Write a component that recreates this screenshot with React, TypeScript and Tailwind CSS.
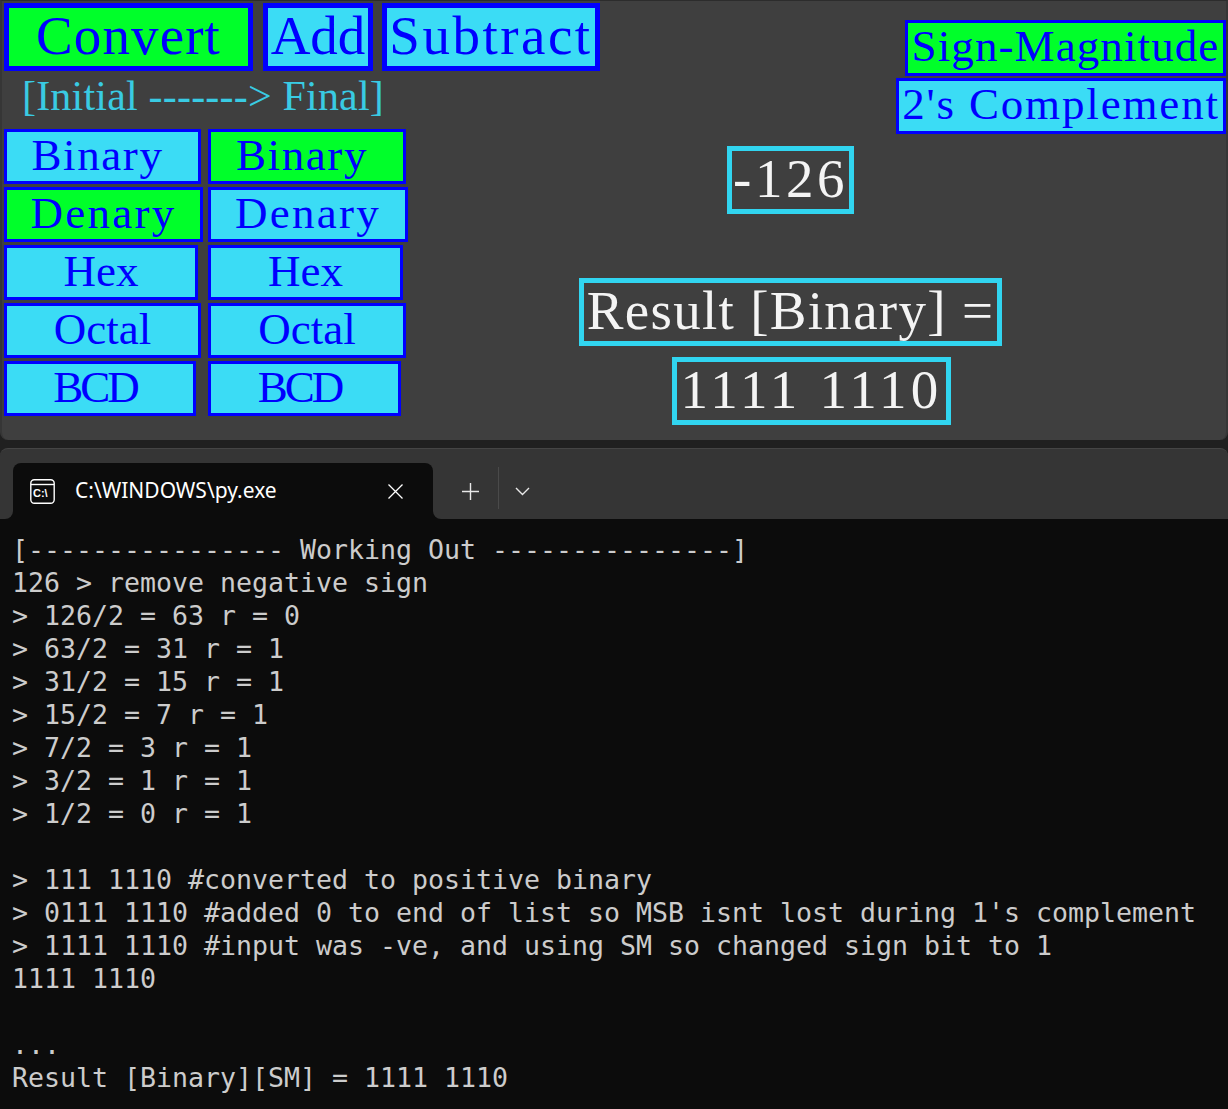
import React from 'react'

const Btn: React.FC<{ label: string; on?: boolean; cls: string }> = ({ label, on, cls }) => (
  <div className={`flex items-center justify-center border-[#0000ff] text-[#0000ff] leading-none whitespace-nowrap ${on ? 'bg-[#00ff2a]' : 'bg-[#3bdcf5]'} ${cls}`}>
    {label}
  </div>
)

const Output: React.FC<{ label: string; cls: string }> = ({ label, cls }) => (
  <div className={`h-[68px] flex items-center justify-center border-[5px] border-[#31d5f0] text-[#f4f4f4] text-[55px] leading-none whitespace-nowrap pb-[3px] ${cls}`}>
    {label}
  </div>
)

const lines = [
  '[---------------- Working Out ---------------]',
  '126 > remove negative sign',
  '> 126/2 = 63 r = 0',
  '> 63/2 = 31 r = 1',
  '> 31/2 = 15 r = 1',
  '> 15/2 = 7 r = 1',
  '> 7/2 = 3 r = 1',
  '> 3/2 = 1 r = 1',
  '> 1/2 = 0 r = 1',
  '',
  '> 111 1110 #converted to positive binary',
  "> 0111 1110 #added 0 to end of list so MSB isnt lost during 1's complement",
  '> 1111 1110 #input was -ve, and using SM so changed sign bit to 1',
  '1111 1110',
  '',
  '...',
  'Result [Binary][SM] = 1111 1110',
]

const rows = [
  { label: 'Binary', a: 'w-[197px]', b: 'w-[198px]', text: 'tracking-[1.6px] pr-[10px]', onA: false, onB: true },
  { label: 'Denary', a: 'w-[199px]', b: 'w-[200px]', text: 'tracking-[2.3px]', onA: true, onB: false },
  { label: 'Hex', a: 'w-[194px]', b: 'w-[195px]', text: '', onA: false, onB: false },
  { label: 'Octal', a: 'w-[197px]', b: 'w-[198px]', text: '', onA: false, onB: false },
  { label: 'BCD', a: 'w-[192px]', b: 'w-[193px]', text: 'tracking-[-3px] pr-[10px]', onA: false, onB: false },
]

export default function App() {
  return (
    <div className="w-[1228px] h-[1109px] overflow-hidden bg-[#202020]">
      {/* tkinter window */}
      <div className="h-[440px] bg-[#3f3f3f] rounded-b-lg border-t border-t-[#2c2c2c] border-x-2 border-x-[#363636] pt-[2px] pl-[2px] flex font-['Liberation_Serif',serif]">
        <div className="w-[600px] shrink-0">
          <div className="flex">
            <Btn label="Convert" on cls="w-[249px] h-[68px] border-[5px] text-[55px] tracking-[1.1px] pb-[4px]" />
            <Btn label="Add" cls="w-[110px] h-[68px] ml-[10px] border-[5px] text-[55px] pb-[4px]" />
            <Btn label="Subtract" cls="w-[218px] h-[68px] ml-[9px] border-[5px] text-[55px] tracking-[2.5px] pb-[4px]" />
          </div>
          <div className="h-[58px] pl-[18px] pb-[8px] flex items-center text-[42px] text-[#39cbe3] tracking-[0.2px] leading-none whitespace-nowrap">
            [Initial -------&gt; Final]
          </div>
          <div className="flex flex-col gap-[3px]">
            {rows.map((r) => (
              <div key={r.label} className="grid grid-cols-[204px_1fr]">
                <Btn label={r.label} on={r.onA} cls={`${r.a} ${r.text} h-[55px] border-[3px] text-[45px] pb-[3px]`} />
                <Btn label={r.label} on={r.onB} cls={`${r.b} ${r.text} h-[55px] border-[3px] text-[45px] pb-[3px]`} />
              </div>
            ))}
          </div>
        </div>
        <div className="flex-1 flex flex-col">
          <div className="flex flex-col items-end pt-[17px] gap-[2px]">
            <Btn label="Sign-Magnitude" on cls="w-[321px] h-[56px] border-[3px] text-[45px] tracking-[1.1px] pb-[3px]" />
            <Btn label="2's Complement" cls="w-[330px] h-[56px] border-[3px] text-[45px] tracking-[1.85px] pb-[3px]" />
          </div>
          <Output label="-126" cls="w-[127px] mt-[12px] ml-[123px] tracking-[3.5px]" />
          <Output label="Result [Binary] =" cls="w-[423px] mt-[64px] ml-[-25px] tracking-[1.3px]" />
          <Output label="1111 1110" cls="w-[279px] mt-[11px] ml-[68px] tracking-[4.3px]" />
        </div>
      </div>

      {/* terminal tab strip */}
      <div className="h-[71px] mt-[8px] bg-[#353535] rounded-t-lg border-t border-t-[#454545] flex items-end pl-[13px] font-['Noto_Sans',sans-serif]">
        <div className="relative w-[420px] h-[56px] bg-[#0c0c0c] rounded-t-lg flex items-center pl-[17px] pr-[30px]">
          <div className="absolute left-[-8px] bottom-0 w-[8px] h-[8px] bg-[#0c0c0c]">
            <div className="w-full h-full bg-[#353535] rounded-br-lg" />
          </div>
          <div className="absolute right-[-8px] bottom-0 w-[8px] h-[8px] bg-[#0c0c0c]">
            <div className="w-full h-full bg-[#353535] rounded-bl-lg" />
          </div>
          <svg width="25" height="25" viewBox="0 0 25 25" fill="none" stroke="#fff" strokeWidth="1.4">
            <rect x="0.8" y="0.8" width="23.4" height="23.4" rx="3.5" />
            <path d="M1 5.5h23" />
            <text x="3" y="18" fontSize="11" fill="#fff" stroke="none" fontFamily="Liberation Sans, sans-serif" fontWeight="700">C:\</text>
          </svg>
          <span className="ml-[20px] text-[21px] text-white flex-1 whitespace-nowrap">C:\WINDOWS\py.exe</span>
          <svg width="15" height="15" viewBox="0 0 15 15" stroke="#fff" strokeWidth="1.3">
            <path d="M0.5 0.5l14 14M14.5 0.5l-14 14" />
          </svg>
        </div>
        <div className="h-[56px] flex items-center">
          <svg className="ml-[29px]" width="17" height="17" viewBox="0 0 17 17" stroke="#e8e8e8" strokeWidth="1.4">
            <path d="M8.5 0v17M0 8.5h17" />
          </svg>
          <div className="w-px h-[42px] bg-[#4a4a4a] ml-[19px] mb-[6px]" />
          <svg className="ml-[16px]" width="15" height="9" viewBox="0 0 15 9" fill="none" stroke="#e8e8e8" strokeWidth="1.4">
            <path d="M1 1l6.5 6.5L14 1" />
          </svg>
        </div>
      </div>

      {/* terminal body */}
      <div className="h-[590px] bg-[#0c0c0c] pl-[12px] pt-[14px] font-['DejaVu_Sans_Mono',monospace] text-[26.58px] leading-[33px] text-[#cccccc] whitespace-pre">
        {lines.map((l, i) => (
          <div key={i} className="h-[33px]">{l}</div>
        ))}
      </div>
    </div>
  )
}
